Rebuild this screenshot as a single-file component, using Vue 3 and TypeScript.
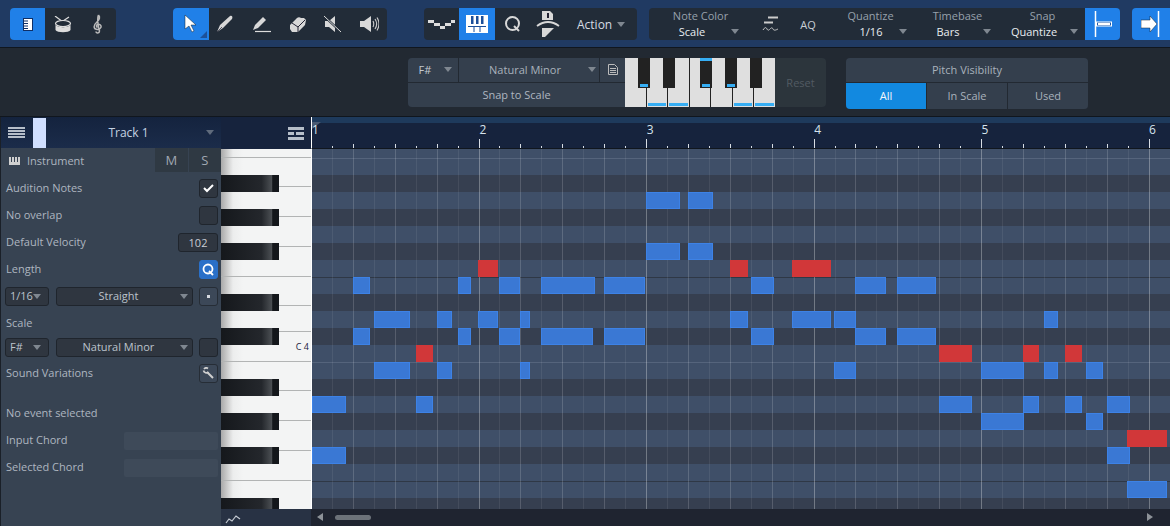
<script setup lang="ts">
type Note = { y: number; a: number; b: number; red?: boolean }
const O = 311
const STEP = 20.94
const raw: [number, number, number, number?][] = [
  [192,646,680],[192,688,713],[243,646,680],[243,688,713],
  [260,478,498,1],[260,730,748,1],[260,792,831,1],
  [277,353,370],[277,458,471],[277,499,520],[277,541,595],[277,604,645],[277,751,774],[277,855,886],[277,897,936],
  [311,374,410],[311,437,452],[311,478,498],[311,520,530],[311,730,748],[311,792,831],[311,834,856],[311,1044,1058],
  [328,353,370],[328,458,471],[328,499,520],[328,541,593],[328,604,645],[328,751,774],[328,855,886],[328,897,936],
  [345,416,433,1],[345,939,972,1],[345,1023,1039,1],[345,1065,1082,1],
  [362,374,410],[362,437,452],[362,520,530],[362,834,856],[362,981,1024],[362,1044,1058],[362,1086,1103],
  [396,312,346],[396,416,433],[396,939,972],[396,1023,1039],[396,1065,1082],[396,1107,1130],
  [413,981,1024],[413,1086,1103],[430,1127,1167,1],[447,312,346],[447,1107,1130],[481,1127,1167]
]
const notes: Note[] = raw.map(([y, a, b, r]) => ({ y, a, b, red: !!r }))
const pattern = ['l','l','d','l','d','l','d','l','l','d','l','d']
const rows = Array.from({ length: 22 }, (_, i) => ({
  type: pattern[i % 12],
  cls: i % 12 === 1 ? 'cline' : i % 12 === 8 ? 'eline' : ''
}))
const lines = Array.from({ length: 41 }, (_, i) => ({
  x: i * STEP,
  kind: i % 8 === 0 ? 'bar' : i % 2 === 0 ? 'mid' : 'minor'
}))
const labels = [1, 2, 3, 4, 5, 6].map((n, i) => ({ n, x: i * 167.4 }))
const whites = [9, 29, 30, 30, 30, 29, 26, 30, 29, 30, 30, 30, 29]
const blacks = [26, 60, 94, 145, 179, 230, 264, 298, 349]
const wideKeys = [1, 2, 3, 4, 5, 6, 7]
const pitchKeys = [
  { x: 13, h: 0 }, { x: 38, h: -1 }, { x: 75, h: 1 }, { x: 100, h: 0 }, { x: 125, h: -1 }
]
const whiteMark = [false, true, true, false, false, true, true]
</script>

<template>
  <div class="app">
    <header class="top">
      <div class="group g1">
        <button class="tb active">
          <svg width="10" height="13" viewBox="0 0 10 13"><rect width="10" height="13" fill="#0f2f66"/><rect x="1" y="1" width="8" height="11" fill="#fff"/><path d="M1 3h4M1 5.500h4M1 8h4M1 10.500h4" stroke="#0f2f66" stroke-width="1.100"/></svg>
        </button>
        <button class="tb">
          <svg width="18" height="17" viewBox="0 0 18 17" fill="none"><path d="M1 0l8 6M15 1L9 5" stroke="#ddd" stroke-width="1.200"/><ellipse cx="9" cy="7.500" rx="7.500" ry="3" fill="#222c38" stroke="#ddd" stroke-width="1.200"/><path d="M1.500 9v5c1.500 3 13.500 3 15 0V9c-3 3-12 3-15 0z" fill="#ddd"/></svg>
        </button>
        <button class="tb">
          <svg width="12" height="20" viewBox="0 0 12 20" fill="none" stroke="#bbb" stroke-width="1.500"><path d="M6.500 1c2 2 1 5-2 7.500C1.500 11 1 15 5 15.500c4 .5 5.500-4 2.500-5-3-1-4 2-2 3M6.500 1C5 4 6 12 7.500 17c0 2.500-3.500 2.500-3.500 .5"/></svg>
        </button>
      </div>
      <div class="group g2">
        <button class="tb active tool">
          <svg width="16" height="20" viewBox="0 0 16 20"><path d="M2 1v14l4-3 3 6 2-1-3-6h5z" fill="#fff" stroke="#123" stroke-width=".5"/></svg>
          <i class="corner"></i>
        </button>
        <button class="tb tool"><svg width="20" height="20" viewBox="0 0 20 20"><path d="M1 18l3-7L14 2c2-1 3 1 2 3l-9 9z" fill="#d8d8d8"/><path d="M1 18l5-5" stroke="#223" stroke-width=".7"/></svg></button>
        <button class="tb tool"><svg width="20" height="20" viewBox="0 0 20 20"><path d="M1 16l2-5 8-8 3 3-8 8z" fill="#d8d8d8"/><path d="M3 17.500h16" stroke="#ddd" stroke-width="1.200"/></svg></button>
        <button class="tb tool"><svg width="20" height="20" viewBox="0 0 20 20"><path d="M2 11l7-7c1-1 3-1 4 0l3 0 2 2-1 5-7 7H4l-2-3z" fill="#d8d8d8"/><path d="M4 9l6 4v5M10 13l7-7" stroke="#223" stroke-width="1" fill="none"/></svg></button>
        <button class="tb tool"><svg width="20" height="20" viewBox="0 0 20 20"><path d="M2 7h4l6-5v16l-6-5H2z" fill="#d8d8d8"/><path d="M1 2l17 16" stroke="#222c38" stroke-width="2.400"/><path d="M1 2l17 16" stroke="#ddd" stroke-width="1"/></svg></button>
        <button class="tb tool"><svg width="20" height="20" viewBox="0 0 20 20" fill="none"><path d="M1 7h4l7-5v16l-7-5H1z" fill="#d8d8d8"/><path d="M14 7c1 2 1 4 0 6M16 5c2 3 2 7 0 10M18 3.500c2.500 4 2.500 9 0 13" stroke="#ccc" stroke-width="1.100"/></svg></button>
      </div>
      <div class="group g3">
        <button class="tb narrow"><svg width="27" height="14" viewBox="0 0 27 14" fill="#ddd"><path d="M0 3h6v3H0zM6 6h6v3H6zM12 9h5v3h-5zM17 6h6v3h-6zM23 3h4v3h-4z"/></svg></button>
        <button class="tb active wide">
          <svg width="22" height="18" viewBox="0 0 22 18"><rect x=".75" y=".75" width="20.500" height="16.500" fill="#fff" stroke="#fff" stroke-width="1.500"/><path d="M5 1h2.500v8H5zM10 1h2.500v8H10zM15 1h2.500v8H15z" fill="#1b4f9a"/><path d="M2 11.500h18" stroke="#1b4f9a"/><path d="M8 12v5M14 12v5" stroke="#1b4f9a"/></svg>
        </button>
        <button class="tb narrow qq"><svg width="18" height="18" viewBox="0 0 18 18" fill="none" stroke="#d8d8d8" stroke-width="2"><circle cx="8.500" cy="8.500" r="6.500"/><path d="M10 11l5 5"/></svg></button>
        <button class="tb narrow mac"><svg width="24" height="28" viewBox="0 0 24 28"><path d="M6 1h8l3 3v6H6z" fill="#d8d8d8"/><path d="M11 3h2v5h-2z" fill="#223"/><path d="M1 16c4-3 6-4 11-4s7 1 11 4" fill="none" stroke="#d8d8d8" stroke-width="1.800"/><path d="M6 18h12l-9 9H6z" fill="#d8d8d8"/></svg></button>
        <div class="action">Action<i class="arrow a-l"></i></div>
      </div>
      <div class="group g4">
        <div class="cell nc">
          <span class="lab">Note Color</span>
          <span class="valrow"><span class="val">Scale</span><i class="arrow"></i></span>
        </div>
        <div class="iconcell ic1"><svg width="18" height="18" viewBox="0 0 18 18" fill="none" stroke="#ccc"><path d="M6 2.500h10M2 7.500h9" stroke-width="2"/><path d="M1 15c2-3 3-3 4-1s2 1 3 0 2-2 3 0 3 1 5 0" stroke-width="1"/></svg></div>
        <div class="iconcell aq">AQ</div>
        <div class="cell qz">
          <span class="lab">Quantize</span>
          <span class="valrow"><span class="val">1/16</span><i class="arrow"></i></span>
        </div>
        <div class="cell tbase">
          <span class="lab">Timebase</span>
          <span class="valrow"><span class="val">Bars</span><i class="arrow"></i></span>
        </div>
        <div class="cell sn">
          <span class="lab">Snap</span>
          <span class="valrow"><span class="val">Quantize</span><i class="arrow"></i></span>
        </div>
      </div>
      <button class="blue b1"><svg width="20" height="26" viewBox="0 0 20 26"><path d="M2.500 0v26" stroke="#fff" stroke-width="1.500"/><rect x="3.500" y="11" width="15" height="4" fill="#1f5aa8" stroke="#fff"/><rect x="5" y="12" width="12" height="2" fill="#fff"/></svg></button>
      <button class="blue b2"><svg width="20" height="26" viewBox="0 0 20 26"><path d="M17.500 0v26" stroke="#fff" stroke-width="1.500"/><path d="M0 9h9V5l7 8-7 8v-4H0z" fill="#fff" stroke="#123" stroke-width=".5"/></svg></button>
    </header>

    <section class="subbar">
      <div class="scale">
        <div class="scale-l">
          <div class="s-top">
            <div class="sc f">F#<i class="arrow"></i></div>
            <div class="sc nm"><span>Natural Minor</span><i class="arrow"></i></div>
            <div class="sc doc"><svg width="10" height="11" viewBox="0 0 10 11" fill="none" stroke="#bbb"><path d="M.5.500h6l3 3v7H.5zM2 4.500h6M2 6.500h6M2 8.500h6"/></svg></div>
          </div>
          <div class="s-bot">Snap to Scale</div>
        </div>
        <div class="kbd">
          <div v-for="(w, i) in wideKeys" :key="w" class="wk"><i v-if="whiteMark[i]"></i></div>
          <div v-for="p in pitchKeys" :key="p.x" class="bk" :style="{ left: p.x + 'px' }">
            <i v-if="p.h === 1" class="root"></i>
            <i v-if="p.h >= 0" class="m"></i>
          </div>
        </div>
        <div class="reset">Reset</div>
      </div>
      <div class="pitch">
        <div class="p-title">Pitch Visibility</div>
        <div class="p-tabs">
          <span class="on">All</span><span>In Scale</span><span>Used</span>
        </div>
      </div>
    </section>

    <main class="main">
      <aside class="panel">
        <div class="ph">
          <svg class="burger" width="17" height="14" viewBox="0 0 17 14" fill="#b6bec9"><path d="M0 1h17v2H0zM0 4h17v2H0zM0 7h17v2H0zM0 10h17v2H0z"/></svg>
          <i class="swatch"></i>
          <span class="tname">Track 1</span>
          <i class="arrow"></i>
        </div>
        <div class="row inst">
          <svg width="11" height="10" viewBox="0 0 11 10" fill="#d0d0d0"><path d="M0 0h2v5h1V0h2v5h1V0h2v5h1V0h2v8H0z"/></svg>
          <span class="il">Instrument</span>
          <div class="ms"><span>M</span><span>S</span></div>
        </div>
        <div class="row"><span>Audition Notes</span><b class="box"><svg width="11" height="9" viewBox="0 0 11 9" fill="none" stroke="#fff" stroke-width="2"><path d="M1 4l3 3 6-6"/></svg></b></div>
        <div class="row"><span>No overlap</span><b class="box"></b></div>
        <div class="row"><span>Default Velocity</span><b class="box num">102</b></div>
        <div class="row"><span>Length</span><b class="box q"><svg width="13" height="13" viewBox="0 0 13 13" fill="none" stroke="#fff" stroke-width="1.800"><circle cx="6" cy="6" r="4.500"/><path d="M7 8l4 4"/></svg></b></div>
        <div class="row dd">
          <div class="sel s1"><span>1/16</span><i class="arrow"></i></div>
          <div class="sel s2"><span>Straight</span><i class="arrow"></i></div>
          <b class="box dot"><i></i></b>
        </div>
        <div class="row short scalelab"><span>Scale</span></div>
        <div class="row short dd">
          <div class="sel s1"><span>F#</span><i class="arrow"></i></div>
          <div class="sel s2"><span>Natural Minor</span><i class="arrow"></i></div>
          <b class="box"></b>
        </div>
        <div class="row"><span>Sound Variations</span><b class="box dot"><svg width="13" height="13" viewBox="0 0 13 13" fill="none" stroke="#d0d0d0" stroke-width="2"><path d="M5 5l6 6"/><path d="M1.500 3.500a3 3 0 0 0 5 1.500M2 2a3 3 0 0 1 4-.5" stroke-width="1.700"/></svg></b></div>
        <div class="gap"></div>
        <div class="row"><span>No event selected</span></div>
        <div class="row"><span>Input Chord</span><b class="field"></b></div>
        <div class="row"><span>Selected Chord</span><b class="field"></b></div>
      </aside>

      <div class="editor">
        <div class="rh">
          <svg width="16" height="13" viewBox="0 0 16 13" fill="#b6bec9"><path d="M0 0h16v3H0zM0 5h6v3H0zM8 5h8v3H8zM0 10h16v3H0z"/></svg>
        </div>
        <div class="ruler">
          <div class="band"></div>
          <i class="flag"></i>
          <span v-for="l in labels" :key="l.n" class="bn" :style="{ left: l.x + 'px' }">{{ l.n }}</span>
          <i v-for="l in lines" :key="l.x" class="tick" :class="l.kind" :style="{ left: l.x + 'px' }"></i>
        </div>
        <div class="piano">
          <div v-for="(h, i) in whites" :key="i" class="white" :style="{ height: h + 'px' }"></div>
          <div v-for="y in blacks" :key="y" class="black" :style="{ top: y + 'px' }"></div>
          <span class="c4">C 4</span>
        </div>
        <div class="canvas">
          <div class="rows">
            <div v-for="(r, i) in rows" :key="i" class="nrow" :class="[r.type, r.cls]"></div>
          </div>
          <i v-for="l in lines" :key="l.x" class="vl" :class="l.kind" :style="{ left: l.x + 'px' }"></i>
          <i v-for="(n, i) in notes" :key="i" class="note" :class="{ red: n.red }"
             :style="{ left: n.a - O + 'px', top: n.y - 149 + 'px', width: n.b - n.a + 'px' }"></i>
          <i class="playhead"></i>
        </div>
        <div class="pfoot">
          <svg width="16" height="10" viewBox="0 0 16 10" fill="none" stroke="#c6ccd4" stroke-width="1.200"><path d="M1 9l3-4 3 2 4-5 4 3"/></svg>
        </div>
        <div class="sbar">
          <i class="tri l"></i>
          <i class="thumb"></i>
          <i class="tri r"></i>
        </div>
      </div>
    </main>
  </div>
</template>

<style>
html, body { margin: 0; background: #222932; }
</style>

<style scoped>
.app {
  width: 1170px; height: 526px; overflow: hidden; position: relative;
  font-family: "Open Sans", "Noto Sans", sans-serif; font-size: 11px; color: #aeb6c0;
}
button { border: 0; padding: 0; margin: 0; background: none; font: inherit; color: inherit; display: flex; align-items: center; justify-content: center; }
i { display: block; font-style: normal; }
b { font-weight: 400; }

.top {
  box-sizing: border-box; padding: 8px 0 7px 10px; display: flex;
  background: #203a62; border-bottom: 1px solid #10161e;
  height: 48px;
}
.group { display: flex; background: #222c38; border-radius: 4px; height: 32px; }
.g1 { width: 106px; }
.g1 .tb { width: 35px; }
.g2 { width: 214px; margin-left: 57px; }
.g2 .tb { width: 35.600px; }
.g3 { width: 213px; margin-left: 37px; }
.g3 .narrow { width: 35px; }
.g3 .wide { width: 36px; }
.g3 .qq { width: 35px; }
.g3 .mac { width: 36px; }
.g4 { margin-left: 12px; width: 436px; border-radius: 4px 0 0 4px; }
.tb { height: 32px; position: relative; flex: none; }
.tb.active { background: #2080e8; }
.g1 .active, .g2 .active { border-radius: 4px 0 0 4px; }
.corner { position: absolute; right: 2px; bottom: 2px; width: 0; height: 0; border-left: 7px solid transparent; border-bottom: 7px solid #1d5199; }
.action { display: flex; align-items: center; color: #d6dce3; font-size: 12px; padding-left: 11px; gap: 5px; }
.arrow { width: 0; height: 0; border-left: 4px solid transparent; border-right: 4px solid transparent; border-top: 5px solid #7f8790; flex: none; }
.cell { display: flex; flex-direction: column; align-items: stretch; text-align: center; box-sizing: border-box; }
.lab { height: 15px; line-height: 15px; color: #97a1ac; font-size: 11px; }
.valrow { display: flex; align-items: center; height: 17px; line-height: 16px; color: #e8ecf0; font-size: 11px; }
.val { display: block; text-align: center; }
.nc { width: 103px; }
.nc .valrow { padding-left: 11px; } .nc .val { width: 64px; } .nc .arrow { margin-left: 7px; }
.qz { width: 89px; }
.qz .valrow { padding-left: 19px; } .qz .val { width: 52px; } .qz .arrow { margin-left: 2px; }
.tbase { width: 85px; }
.tbase .valrow { padding-left: 10px; } .tbase .val { width: 46px; } .tbase .arrow { margin-left: 12px; }
.sn { width: 85px; }
.sn .valrow { padding-left: 10px; } .sn .val { width: 48px; } .sn .arrow { margin-left: 12px; }
.iconcell { display: flex; align-items: center; justify-content: center; }
.ic1 { width: 38px; }
.aq { width: 36px; color: #c8ced5; }
.blue { width: 35px; height: 32px; background: #2080e8; }
.b1 { border-radius: 0 4px 4px 0; }
.b2 { width: 38px; margin-left: 12px; border-radius: 4px 0 0 4px; }

.subbar {
  height: 69px; box-sizing: border-box; background: #222932; border-bottom: 1px solid #10161e;
  display: flex; padding: 10px 0 0 408px;
}
.scale { display: flex; height: 49px; width: 418px; }
.scale-l { width: 217px; background: #343f4d; border-radius: 4px 0 0 4px; overflow: hidden; }
.s-top { display: flex; height: 25px; border-bottom: 1px solid #222932; box-sizing: border-box; }
.sc { display: flex; align-items: center; justify-content: center; border-right: 1px solid #222932; box-sizing: border-box; color: #a9b2bc; padding-bottom: 2px; }
.f { width: 51px; gap: 13px; padding-left: 5px; color: #c3c9d0; }
.nm { width: 141px; padding-left: 9px; }
.nm span { width: 108px; text-align: center; }
.nm .arrow { margin-left: 9px; }
.doc { width: 25px; border-right: 0; }
.s-bot { height: 24px; line-height: 24px; text-align: center; color: #aeb6c0; }
.kbd { width: 150px; height: 49px; position: relative; display: flex; background: #222; gap: 1px; }
.wk { flex: 1; background: #dfdfdf; position: relative; }
.wk i { position: absolute; left: 1px; right: 1px; bottom: 1px; height: 3px; background: #36aef4; }
.bk { position: absolute; top: 0; width: 12px; height: 30px; background: #222; }
.bk .m { position: absolute; left: 2px; right: 2px; top: 26px; height: 3px; background: #36aef4; }
.bk .root { position: absolute; left: 0; right: 0; top: 0; height: 3px; background: #36aef4; }
.reset { width: 51px; background: #2c353c; border-radius: 0 4px 4px 0; color: #525b63; text-align: center; line-height: 49px; }
.pitch { margin-left: 20px; width: 242px; height: 51px; background: #343f4d; border-radius: 4px; overflow: hidden; }
.p-title { height: 25px; line-height: 24px; text-align: center; color: #a9b2bc; border-bottom: 1px solid #222932; box-sizing: border-box; }
.p-tabs { display: flex; height: 26px; gap: 1px; background: #222932; }
.p-tabs span { flex: 1; line-height: 26px; text-align: center; background: #343f4d; color: #a9b2bc; }
.p-tabs .on { background: #1289e0; color: #f4f7fa; flex: none; width: 80px; }

.main { display: flex; height: 409px; }
.panel { width: 220px; margin-left: 1px; background: #374352; flex: none; box-shadow: -1px 0 0 #1a2028; }
.ph { height: 31px; display: flex; align-items: center; background: linear-gradient(#14233e, #1b2c4a); position: relative; }
.burger { margin-left: 7px; }
.swatch { width: 13px; height: 30px; background: #d0dfff; margin-left: 8px; }
.tname { flex: 1; text-align: center; color: #c4d2e2; font-size: 12px; padding-left: 5px; }
.ph .arrow { margin-right: 7px; border-top-color: #5f6b7c; }
.row { height: 27px; display: flex; align-items: center; justify-content: space-between; padding: 0 3px 0 5px; box-sizing: border-box; }
.row > span { margin-top: -2px; }
.row.scalelab > span { margin-top: 0; }
.short { height: 25px; }
.gap { height: 13px; }
.inst { justify-content: flex-start; padding-right: 0; padding-left: 8px; align-items: flex-start; }
.inst svg { margin-top: 9px; }
.row > .il { margin-left: 7px; margin-top: 5px; }
.ms { margin-left: auto; display: flex; width: 66px; height: 24px; gap: 1px; }
.ms span { flex: 1; background: #2f3943; text-align: center; line-height: 24px; font-size: 13px; color: #a0a8b2; }
.box { width: 19px; height: 19px; box-sizing: border-box; background: #2f3640; border: 1px solid #1f252d; border-radius: 3px; display: flex; align-items: center; justify-content: center; }
.num { width: 40px; color: #c8cdd4; }
.q { background: #2a70c8; border-color: #2a70c8; }
.dot { background: #3c4858; border-color: #262d36; }
.dot i { width: 3px; height: 3px; background: #d6dae0; }
.dd { padding-left: 4px; justify-content: flex-start; }
.sel { height: 19px; box-sizing: border-box; background: #2f3640; border: 1px solid #1f252d; border-radius: 3px; display: flex; align-items: center; color: #bcc3cc; }
.sel span { margin-top: -2px; }
.s1 { width: 44px; padding: 0 7px 0 4px; justify-content: space-between; }
.s2 { width: 138px; margin-left: 7px; margin-right: 6px; padding: 0 4px 0 0; }
.s2 span { flex: 1; text-align: center; }
.field { width: 94px; height: 18px; background: #3e4a59; border-radius: 2px; }

.editor { display: grid; grid-template-columns: 90px 859px; grid-template-rows: 32px 360px 17px; flex: none; }
.rh { background: #16233d; display: flex; align-items: center; justify-content: flex-end; padding-right: 7px; box-sizing: border-box; }
.ruler { position: relative; background: #16233d; border-left: 1px solid #fff; box-sizing: border-box; overflow: hidden; border-bottom: 1px solid #10161e; }
.band { height: 6px; background: #1e3a5c; }
.flag { position: absolute; left: 0; top: 5px; width: 0; height: 0; border-top: 7px solid #4a5a72; border-right: 9px solid transparent; }
.bn { position: absolute; top: 5px; color: #d6e4ee; font-size: 12px; line-height: 16px; }
.tick { position: absolute; bottom: 0; width: 1px; background: #d8dde4; margin-left: -1px; }
.tick.minor { height: 2px; }
.tick.mid { height: 4px; }
.tick.bar { height: 9px; }
.piano { position: relative; background: #f2f3f3; overflow: hidden; box-sizing: border-box; }
.white { box-sizing: border-box; border-bottom: 1px solid #b2b4b4; background: linear-gradient(90deg, #a9a9a9, #eceded 12px, #f3f4f4 22px); }
.black { position: absolute; left: 0; width: 58px; height: 17px; background: linear-gradient(90deg, #15181c 0, #24272c 70%, #4c5054 88%, #14171b 89%); }
.c4 { position: absolute; right: 2px; top: 192px; font-size: 9px; line-height: 12px; color: #1c1c40; }
.canvas { position: relative; overflow: hidden; }
.rows { margin-top: -8px; }
.nrow { height: 17px; box-sizing: border-box; }
.nrow.l { background: #3f4f68; }
.nrow.d { background: #363f50; }
.nrow.cline { border-top: 1px solid #55647c; }
.nrow.eline { border-top: 1px solid #2f3846; }
.vl { position: absolute; top: 0; bottom: 0; width: 1px; }
.vl.minor { background: rgba(255,255,255,.07); }
.vl.mid { background: rgba(255,255,255,.16); }
.vl.bar { background: rgba(255,255,255,.3); }
.playhead { position: absolute; left: 0; top: 0; bottom: 0; width: 1px; background: #fff; }
.note { position: absolute; height: 17px; box-sizing: border-box; background: #3a78d4; border: 1px solid #3d82e6; }
.note.red { background: #d13739; border-color: #d13739; }
.pfoot { background: #283244; padding: 3px 0 0 4px; box-sizing: border-box; }
.sbar { background: #1f2430; position: relative; display: flex; align-items: center; }
.thumb { position: absolute; left: 24px; top: 6px; width: 36px; height: 5px; background: #6c7279; border-radius: 3px; }
.tri { position: absolute; top: 4px; width: 0; height: 0; border-top: 4px solid transparent; border-bottom: 4px solid transparent; }
.tri.l { left: 6px; border-right: 6px solid #8d9298; }
.tri.r { left: 836px; border-left: 6px solid #8d9298; }
</style>
